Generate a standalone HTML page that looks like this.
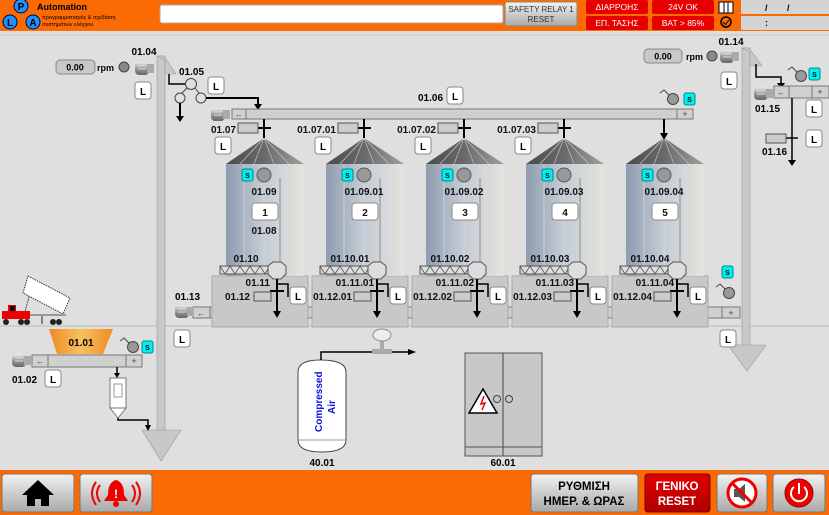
<!DOCTYPE html>
<html><head><meta charset="utf-8"><style>
html,body{margin:0;padding:0;width:829px;height:515px;overflow:hidden;background:#dfdfdf}
svg{display:block;font-family:"Liberation Sans",sans-serif}
</style></head><body>
<svg width="829" height="515" viewBox="0 0 829 515" xmlns="http://www.w3.org/2000/svg">
<defs>
<linearGradient id="body" x1="0" x2="1" y1="0" y2="0">
<stop offset="0" stop-color="#8e9cae"/><stop offset="0.45" stop-color="#c2cad4"/><stop offset="1" stop-color="#e4e3dc"/></linearGradient>
<linearGradient id="roof" x1="0" x2="1"><stop offset="0" stop-color="#4a4a4a"/><stop offset="0.5" stop-color="#6a6a6a"/><stop offset="1" stop-color="#a0a0a0"/></linearGradient>
<linearGradient id="btn" x1="0" x2="0" y1="0" y2="1"><stop offset="0" stop-color="#f2f2f2"/><stop offset="1" stop-color="#a9a9a9"/></linearGradient>
<linearGradient id="red" x1="0" x2="0" y1="0" y2="1"><stop offset="0" stop-color="#e00000"/><stop offset="1" stop-color="#b00000"/></linearGradient>
<linearGradient id="hop" x1="0" x2="1"><stop offset="0" stop-color="#f08a20"/><stop offset="0.5" stop-color="#f8c060"/><stop offset="1" stop-color="#f08a20"/></linearGradient>
<linearGradient id="mot" x1="0" x2="0" y1="0" y2="1"><stop offset="0" stop-color="#eee"/><stop offset="0.5" stop-color="#999"/><stop offset="1" stop-color="#666"/></linearGradient>
<g id="motor"><rect x="0" y="2" width="14" height="13" rx="4" fill="url(#mot)"/><rect x="12" y="4" width="7" height="9" fill="#aaa"/><line x1="3" y1="6" x2="11" y2="6" stroke="#ddd"/><line x1="3" y1="9" x2="11" y2="9" stroke="#ddd"/></g>
<g id="Lb"><rect x="0" y="0" width="16" height="17" rx="3" fill="#fff" stroke="#888"/><text x="8" y="13" font-size="10" font-weight="bold" text-anchor="middle" fill="#000">L</text></g>
<g id="Sb"><rect x="0" y="0" width="11" height="12" rx="2" fill="#00f0f0" stroke="#088"/><text x="5.5" y="9" font-size="7" font-weight="bold" text-anchor="middle" fill="#000">S</text></g>
<g id="sens"><circle cx="0" cy="0" r="5.5" fill="#999" stroke="#444"/><path d="M-4,-4 L-9,-9 L-13,-6" fill="none" stroke="#444"/></g>
<g id="feed">
<line x1="0" y1="119" x2="0" y2="138" stroke="#000" stroke-width="2"/>
<line x1="-7" y1="128" x2="7" y2="128" stroke="#000" stroke-width="2"/>
<rect x="-26" y="123" width="20" height="10" fill="#ccc" stroke="#555"/>
</g>
<g id="silo">
<rect x="-52" y="276" width="96" height="51" fill="#c8c8c8" stroke="#aaa"/>
<rect x="-38" y="164" width="78" height="112" fill="url(#body)"/>
<line x1="-20" y1="164" x2="-20" y2="276" stroke="#d8dde2" stroke-width="0.7"/>
<line x1="0" y1="164" x2="0" y2="276" stroke="#d8dde2" stroke-width="0.7"/>
<line x1="20" y1="164" x2="20" y2="276" stroke="#d8dde2" stroke-width="0.7"/>
<line x1="16" y1="178" x2="16" y2="266" stroke="#999" stroke-width="1.2"/>
<polygon points="0,138 -38,164 40,164" fill="url(#roof)"/>
<path d="M0,138 L-24,164 M0,138 L-10,164 M0,138 L10,164 M0,138 L25,164" stroke="#ccc" stroke-width="0.6"/>
<circle cx="0" cy="175" r="7" fill="#999" stroke="#555"/>
<rect x="-12" y="203" width="26" height="17" rx="3" fill="#fff" stroke="#888"/>
<rect x="-44" y="266" width="50" height="8" fill="#ddd" stroke="#555"/>
<path d="M-44,266 L-39,274 L-34,266 L-29,274 L-24,266 L-19,274 L-14,266 L-9,274 L-4,266 L1,274 L6,266" fill="none" stroke="#555" stroke-width="0.8"/>
<polygon points="9,262 17,262 22,266 22,274 17,279 9,279 4,274 4,266" fill="#ddd" stroke="#555"/>
<line x1="13" y1="279" x2="13" y2="313" stroke="#000" stroke-width="2"/>
<polygon points="9,311 17,311 13,318" fill="#000"/>
<line x1="6" y1="291" x2="20" y2="291" stroke="#000" stroke-width="2"/>
<path d="M13,284 L24,284 L24,297" fill="none" stroke="#000" stroke-width="1.5"/>
<rect x="-10" y="292" width="17" height="9" fill="#ccc" stroke="#555"/>
<use href="#Lb" x="26" y="287"/>
<use href="#Sb" x="-22" y="169"/>
</g>
</defs>

<!-- header -->
<rect x="0" y="0" width="829" height="31" fill="#fc6a04"/>
<circle cx="21" cy="6" r="7" fill="#1e90ff" stroke="#003"/><text x="21" y="10" font-size="10" font-weight="bold" text-anchor="middle">P</text>
<circle cx="10" cy="22" r="7" fill="#1e90ff" stroke="#003"/><text x="10" y="26" font-size="10" font-weight="bold" text-anchor="middle">L</text>
<circle cx="33" cy="22" r="7" fill="#1e90ff" stroke="#003"/><text x="33" y="26" font-size="10" font-weight="bold" text-anchor="middle">A</text>
<text x="37" y="10" font-size="9" font-weight="bold" fill="#000">Automation</text>
<text x="42" y="19" font-size="5.5" fill="#000">προγραμματισμός &amp; σχεδίαση</text>
<text x="42" y="26" font-size="5.5" fill="#000">συστημάτων ελέγχου</text>
<rect x="160" y="5" width="343" height="18" rx="2" fill="#fff" stroke="#aaa"/>
<rect x="505" y="2" width="72" height="24" rx="2" fill="url(#btn)" stroke="#888"/>
<text x="541" y="12" font-size="8" text-anchor="middle" fill="#333">SAFETY RELAY 1</text>
<text x="541" y="22" font-size="8" text-anchor="middle" fill="#333">RESET</text>
<rect x="586" y="0" width="62" height="14" rx="2" fill="#e80000"/><text x="617" y="10" font-size="8.5" text-anchor="middle" fill="#fff">ΔΙΑΡΡΟΗΣ</text>
<rect x="586" y="16" width="62" height="14" rx="2" fill="#e80000"/><text x="617" y="26" font-size="8.5" text-anchor="middle" fill="#fff">ΕΠ. ΤΑΣΗΣ</text>
<rect x="652" y="0" width="62" height="14" rx="2" fill="#e80000"/><text x="683" y="10" font-size="8.5" text-anchor="middle" fill="#fff">24V OK</text>
<rect x="652" y="16" width="62" height="14" rx="2" fill="#e80000"/><text x="683" y="26" font-size="8.5" text-anchor="middle" fill="#fff">BAT &gt; 85%</text>
<rect x="719" y="2" width="14" height="11" fill="#fff" stroke="#000"/><line x1="724" y1="2" x2="724" y2="13" stroke="#000"/><line x1="728" y1="2" x2="728" y2="13" stroke="#000"/>
<circle cx="726" cy="22" r="5" fill="none" stroke="#000" stroke-width="1.5"/><path d="M723,22 L725.5,24.5 L729,20" fill="none" stroke="#000"/>
<rect x="741" y="0" width="88" height="14" fill="#d4d4d4"/><rect x="741" y="16" width="88" height="14" fill="#d4d4d4"/>
<text x="765" y="11" font-size="9" font-weight="bold">/</text><text x="787" y="11" font-size="9" font-weight="bold">/</text>
<text x="765" y="26" font-size="9" font-weight="bold">:</text>

<!-- divider -->
<line x1="0" y1="326" x2="829" y2="326" stroke="#bbb"/>
<line x1="0" y1="35" x2="829" y2="35" stroke="#c8c8c8"/>

<!-- left elevator -->
<rect x="157" y="56" width="8" height="376" fill="#c8c8c8" stroke="#999" stroke-width="0.6"/>
<polygon points="157,56 164,56 176,74 165,74 165,60" fill="#c8c8c8" stroke="#999" stroke-width="0.6"/>
<polygon points="142,430 181,430 161,461" fill="#c8c8c8" stroke="#999" stroke-width="0.6"/>
<!-- right elevator -->
<rect x="742" y="48" width="8" height="298" fill="#c8c8c8" stroke="#999" stroke-width="0.6"/>
<polygon points="742,48 749,48 762,66 750,66 750,52" fill="#c8c8c8" stroke="#999" stroke-width="0.6"/>
<polygon points="728,345 766,345 747,371" fill="#c8c8c8" stroke="#999" stroke-width="0.6"/>

<!-- top left controls -->
<rect x="56" y="60" width="39" height="14" rx="4" fill="#c8c8c8" stroke="#888"/><text x="75" y="70.5" font-size="9" font-weight="bold" text-anchor="middle">0.00</text>
<text x="97" y="71" font-size="9" font-weight="bold">rpm</text>
<circle cx="124" cy="67" r="5" fill="#888" stroke="#444"/>
<use href="#motor" x="135" y="60"/>
<text x="144" y="55" font-size="10" font-weight="bold" text-anchor="middle">01.04</text>
<use href="#Lb" x="135" y="82"/>
<text x="179" y="75" font-size="10" font-weight="bold">01.05</text>
<path d="M169,74 L169,84 L185,84" fill="none" stroke="#000" stroke-width="1.5"/>
<circle cx="191" cy="84" r="5.5" fill="#e0e0e0" stroke="#444"/>
<circle cx="180" cy="98" r="5" fill="#e0e0e0" stroke="#444"/>
<circle cx="201" cy="98" r="5" fill="#e0e0e0" stroke="#444"/>
<path d="M187,88 L182,93 M195,88 L199,93" stroke="#444"/>
<path d="M206,98 L258,98 L258,106" fill="none" stroke="#000" stroke-width="2"/><polygon points="254,104 262,104 258,110" fill="#000"/>
<line x1="180" y1="103" x2="180" y2="117" stroke="#000" stroke-width="2"/><polygon points="176,116 184,116 180,122" fill="#000"/>
<use href="#Lb" x="208" y="77"/>

<!-- top conveyor -->
<rect x="232" y="109" width="461" height="10" fill="#d0d0d0" stroke="#777"/>
<rect x="232" y="109" width="14" height="10" fill="#d0d0d0" stroke="#777"/><text x="239" y="117" font-size="8" text-anchor="middle" fill="#444">←</text>
<rect x="677" y="109" width="16" height="10" fill="#d0d0d0" stroke="#777"/><text x="685" y="117" font-size="9" text-anchor="middle" fill="#444">+</text>
<use href="#motor" x="211" y="106"/>
<text x="418" y="101" font-size="10" font-weight="bold">01.06</text>
<use href="#Lb" x="447" y="87"/>
<use href="#sens" x="673" y="99"/><use href="#Sb" x="684" y="93"/>

<!-- bottom conveyor -->
<rect x="193" y="307" width="547" height="11" fill="#d0d0d0" stroke="#777"/>
<rect x="193" y="307" width="17" height="11" fill="#d0d0d0" stroke="#777"/><text x="201" y="316" font-size="8" text-anchor="middle" fill="#444">←</text>
<rect x="722" y="307" width="18" height="11" fill="#d0d0d0" stroke="#777"/><text x="731" y="316" font-size="9" text-anchor="middle" fill="#444">+</text>

<!-- silos -->
<use href="#silo" x="264"/><use href="#silo" x="364"/><use href="#silo" x="464"/><use href="#silo" x="564"/><use href="#silo" x="664"/>
<use href="#feed" x="264"/><use href="#feed" x="364"/><use href="#feed" x="464"/><use href="#feed" x="564"/>
<use href="#motor" x="175" y="303"/>
<text x="175" y="300" font-size="10" font-weight="bold">01.13</text>
<use href="#Lb" x="174" y="330"/>

<g font-size="10" font-weight="bold" fill="#111">
<text x="236" y="133" text-anchor="end">01.07</text><use href="#Lb" x="215" y="137"/>
<text x="336" y="133" text-anchor="end">01.07.01</text><use href="#Lb" x="315" y="137"/>
<text x="436" y="133" text-anchor="end">01.07.02</text><use href="#Lb" x="415" y="137"/>
<text x="536" y="133" text-anchor="end">01.07.03</text><use href="#Lb" x="515" y="137"/>
<text x="264" y="195" text-anchor="middle">01.09</text><text x="364" y="195" text-anchor="middle">01.09.01</text><text x="464" y="195" text-anchor="middle">01.09.02</text><text x="564" y="195" text-anchor="middle">01.09.03</text><text x="664" y="195" text-anchor="middle">01.09.04</text>
<text x="265" y="216" text-anchor="middle">1</text><text x="365" y="216" text-anchor="middle">2</text><text x="465" y="216" text-anchor="middle">3</text><text x="565" y="216" text-anchor="middle">4</text><text x="665" y="216" text-anchor="middle">5</text>
<text x="264" y="234" text-anchor="middle">01.08</text>
<text x="246" y="262" text-anchor="middle">01.10</text><text x="350" y="262" text-anchor="middle">01.10.01</text><text x="450" y="262" text-anchor="middle">01.10.02</text><text x="550" y="262" text-anchor="middle">01.10.03</text><text x="650" y="262" text-anchor="middle">01.10.04</text>
<text x="270" y="286" text-anchor="end">01.11</text><text x="374" y="286" text-anchor="end">01.11.01</text><text x="474" y="286" text-anchor="end">01.11.02</text><text x="574" y="286" text-anchor="end">01.11.03</text><text x="674" y="286" text-anchor="end">01.11.04</text>
<text x="250" y="300" text-anchor="end">01.12</text><text x="352" y="300" text-anchor="end">01.12.01</text><text x="452" y="300" text-anchor="end">01.12.02</text><text x="552" y="300" text-anchor="end">01.12.03</text><text x="652" y="300" text-anchor="end">01.12.04</text>
</g>
<line x1="664" y1="119" x2="664" y2="134" stroke="#000" stroke-width="2"/><polygon points="660,133 668,133 664,140" fill="#000"/>

<!-- right top -->
<rect x="644" y="49" width="38" height="14" rx="4" fill="#c8c8c8" stroke="#888"/><text x="663" y="59.5" font-size="9" font-weight="bold" text-anchor="middle">0.00</text>
<text x="686" y="60" font-size="9" font-weight="bold">rpm</text>
<circle cx="712" cy="56" r="5" fill="#888" stroke="#444"/>
<use href="#motor" x="720" y="48"/>
<text x="731" y="45" font-size="10" font-weight="bold" text-anchor="middle">01.14</text>
<use href="#Lb" x="721" y="72"/>
<path d="M756,64 L756,77 L781,77 L781,84" fill="none" stroke="#000" stroke-width="1.5"/><polygon points="777,83 785,83 781,89" fill="#000"/>
<use href="#sens" x="801" y="76"/><use href="#Sb" x="809" y="68"/>
<rect x="774" y="86" width="55" height="12" fill="#d0d0d0" stroke="#777"/>
<rect x="774" y="86" width="15" height="12" fill="#d0d0d0" stroke="#777"/><text x="781" y="95" font-size="8" text-anchor="middle" fill="#444">←</text>
<rect x="812" y="86" width="17" height="12" fill="#d0d0d0" stroke="#777"/><text x="820" y="95" font-size="9" text-anchor="middle" fill="#444">+</text>
<use href="#motor" x="754" y="85"/>
<text x="755" y="112" font-size="10" font-weight="bold">01.15</text>
<use href="#Lb" x="806" y="100"/>
<line x1="792" y1="98" x2="792" y2="162" stroke="#000" stroke-width="1.5"/><polygon points="788,160 796,160 792,166" fill="#000"/>
<line x1="786" y1="138" x2="798" y2="138" stroke="#000" stroke-width="1.5"/>
<rect x="766" y="134" width="20" height="9" fill="#ccc" stroke="#555"/>
<text x="762" y="155" font-size="10" font-weight="bold">01.16</text>
<use href="#Lb" x="806" y="130"/>
<use href="#Sb" x="722" y="266"/>
<use href="#sens" x="729" y="293"/>
<use href="#Lb" x="720" y="330"/>

<!-- truck -->
<polygon points="28,276 70,298 63,314 23,293" fill="#fff" stroke="#333" stroke-dasharray="1.5,1"/>
<line x1="29" y1="297" x2="24" y2="315" stroke="#333" stroke-dasharray="1.5,1"/>
<rect x="20" y="314" width="46" height="2" fill="#999"/>
<rect x="2" y="311" width="28" height="8" fill="#e00"/><rect x="8" y="305" width="8" height="8" fill="#e00"/><rect x="10" y="306" width="5" height="5" fill="#111"/>
<circle cx="6" cy="322" r="3" fill="#222"/><circle cx="21" cy="322" r="3" fill="#222"/><circle cx="27" cy="322" r="3" fill="#222"/><circle cx="53" cy="322" r="3" fill="#222"/><circle cx="59" cy="322" r="3" fill="#222"/>
<line x1="42" y1="316" x2="42" y2="324" stroke="#222"/>

<!-- hopper -->
<polygon points="49,329 113,329 103,354 57,354" fill="url(#hop)"/>
<text x="81" y="346" font-size="10" font-weight="bold" text-anchor="middle">01.01</text>
<use href="#sens" x="133" y="347"/><use href="#Sb" x="142" y="341"/>
<rect x="32" y="355" width="110" height="12" fill="#d0d0d0" stroke="#777"/>
<rect x="32" y="355" width="16" height="12" fill="#d0d0d0" stroke="#777"/><text x="40" y="364" font-size="8" text-anchor="middle" fill="#444">←</text>
<rect x="126" y="355" width="16" height="12" fill="#d0d0d0" stroke="#777"/><text x="134" y="364" font-size="9" text-anchor="middle" fill="#444">+</text>
<use href="#motor" x="12" y="352"/>
<text x="12" y="383" font-size="10" font-weight="bold">01.02</text>
<use href="#Lb" x="45" y="370"/>
<line x1="117" y1="367" x2="117" y2="374" stroke="#000" stroke-width="1.5"/><polygon points="114,373 120,373 117,378" fill="#000"/>
<rect x="110" y="378" width="16" height="30" fill="#fff" stroke="#777"/><rect x="114" y="384" width="8" height="13" fill="#fff" stroke="#999"/>
<polygon points="110,408 126,408 118,418" fill="#fff" stroke="#777"/>
<path d="M118,418 L118,420 L148,420 L148,426" fill="none" stroke="#000" stroke-width="1.5"/><polygon points="145,425 151,425 148,431" fill="#000"/>

<!-- compressed air -->
<path d="M298,372 Q298,360 320,360 Q346,360 346,372 L346,440 Q346,452 322,452 Q298,452 298,440 Z" fill="#fff" stroke="#444"/>
<line x1="298" y1="440" x2="346" y2="440" stroke="#999"/>
<text transform="translate(322,432) rotate(-90)" font-size="10" font-weight="bold" fill="#1010e0">Compressed</text>
<text transform="translate(335,414) rotate(-90)" font-size="10" font-weight="bold" fill="#1010e0">Air</text>
<text x="322" y="466" font-size="10" font-weight="bold" text-anchor="middle">40.01</text>
<path d="M321,360 L321,352 L372,352" fill="none" stroke="#000" stroke-width="1.5"/>
<rect x="372" y="349" width="20" height="5" fill="#aaa"/><rect x="380" y="340" width="4" height="10" fill="#aaa"/>
<ellipse cx="382" cy="335" rx="9" ry="6" fill="#eee" stroke="#888"/>
<line x1="392" y1="352" x2="410" y2="352" stroke="#000" stroke-width="1.5"/><polygon points="408,349 416,352 408,355" fill="#000"/>

<!-- cabinet -->
<rect x="465" y="353" width="77" height="103" fill="#c8c8c8" stroke="#555"/>
<line x1="503" y1="353" x2="503" y2="456" stroke="#444"/>
<line x1="465" y1="447" x2="542" y2="447" stroke="#555"/>
<circle cx="497" cy="399" r="3.5" fill="none" stroke="#444"/><circle cx="509" cy="399" r="3.5" fill="none" stroke="#444"/>
<polygon points="483,389 497,413 469,413" fill="#fff" stroke="#000" stroke-width="1.5"/>
<path d="M484,396 L481,404 L485,403 L482,410" fill="none" stroke="#e00" stroke-width="1.5"/>
<text x="503" y="466" font-size="10" font-weight="bold" text-anchor="middle">60.01</text>

<!-- footer -->
<rect x="0" y="470" width="829" height="45" fill="#fc6a04"/>
<rect x="2" y="474" width="72" height="38" rx="3" fill="url(#btn)" stroke="#777"/>
<path d="M38,480 L22,495 L27,495 L27,506 L35,506 L35,499 L41,499 L41,506 L49,506 L49,495 L54,495 Z" fill="#000"/>
<rect x="80" y="474" width="72" height="38" rx="3" fill="url(#btn)" stroke="#777"/>
<path d="M116,480 Q108,482 108,495 L104,501 L128,501 L124,495 Q124,482 116,480 Z" fill="#e00"/><circle cx="116" cy="504" r="3" fill="#e00"/>
<text x="116" y="498" font-size="12" font-weight="bold" fill="#fff" text-anchor="middle">!</text>
<path d="M100,485 Q94,493 100,502 M96,482 Q88,493 96,505 M132,485 Q138,493 132,502 M136,482 Q144,493 136,505" fill="none" stroke="#e00" stroke-width="2"/>
<rect x="531" y="474" width="107" height="38" rx="3" fill="url(#btn)" stroke="#777"/>
<text x="584" y="490" font-size="11.5" font-weight="bold" text-anchor="middle">ΡΥΘΜΙΣΗ</text>
<text x="584" y="505" font-size="11.5" font-weight="bold" text-anchor="middle">ΗΜΕΡ. &amp; ΩΡΑΣ</text>
<rect x="645" y="474" width="65" height="38" rx="3" fill="url(#red)" stroke="#700"/>
<text x="677" y="490" font-size="11.5" font-weight="bold" fill="#fff" text-anchor="middle">ΓΕΝΙΚΟ</text>
<text x="677" y="505" font-size="11.5" font-weight="bold" fill="#fff" text-anchor="middle">RESET</text>
<rect x="717" y="474" width="50" height="38" rx="3" fill="url(#btn)" stroke="#777"/>
<circle cx="742" cy="493" r="14" fill="#fff" stroke="#e00" stroke-width="3"/>
<path d="M734,489 L739,489 L745,484 L745,502 L739,497 L734,497 Z" fill="#555"/>
<line x1="732" y1="483" x2="752" y2="503" stroke="#e00" stroke-width="3"/>
<rect x="773" y="474" width="52" height="38" rx="3" fill="url(#btn)" stroke="#777"/>
<circle cx="799" cy="493" r="14" fill="#e00" stroke="#900"/>
<path d="M794,487 A8,8 0 1 0 804,487" fill="none" stroke="#fff" stroke-width="2"/>
<line x1="799" y1="483" x2="799" y2="494" stroke="#fff" stroke-width="2"/>
</svg>
</body></html>
